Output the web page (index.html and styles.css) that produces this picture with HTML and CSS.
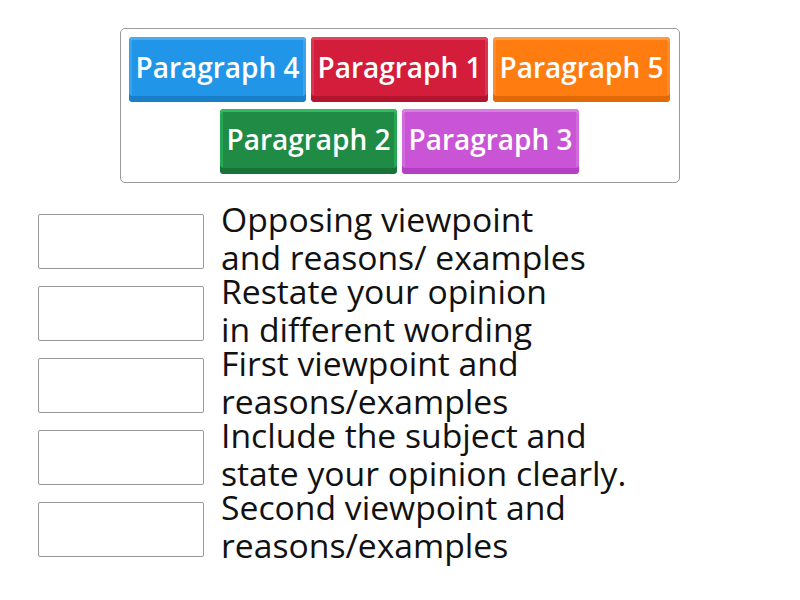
FILE: index.html
```html
<html>
<head>
  <link rel="stylesheet" href="styles.css">
</head>
<body>
<div class="page">
  <!-- the answer tiles -->
  <div class="tray">
    <div class="tile tile-blue">Paragraph 4</div>
    <div class="tile tile-red">Paragraph 1</div>
    <div class="tile tile-orange">Paragraph 5</div>
    <div class="tile tile-green">Paragraph 2</div>
    <div class="tile tile-purple">Paragraph 3</div>
  </div>

  <!-- the drop targets -->
  <div class="slots">
    <div class="slot">
      <div class="slot__box"></div>
      <div class="slot__text">Opposing viewpoint<br>and reasons/ examples</div>
    </div>
    <div class="slot">
      <div class="slot__box"></div>
      <div class="slot__text">Restate your opinion<br>in different wording</div>
    </div>
    <div class="slot">
      <div class="slot__box"></div>
      <div class="slot__text">First viewpoint and<br>reasons/examples</div>
    </div>
    <div class="slot">
      <div class="slot__box"></div>
      <div class="slot__text">Include the subject and<br>state your opinion clearly.</div>
    </div>
    <div class="slot">
      <div class="slot__box"></div>
      <div class="slot__text">Second viewpoint and<br>reasons/examples</div>
    </div>
  </div>
</div>
</body>
</html>
```

FILE: styles.css
```css
*{
  margin:0;
  box-sizing:border-box;
}
body{
  background:#fff;
  font-family:"Open Sans", "Noto Sans", sans-serif;
}
.page{
  width:800px;
  height:600px;
  padding-top:28px;
}

/* tiles tray */
.tray{
  width:560px;
  margin:0 auto;
  padding:8px 8px 8px 7px;
  border:1px solid #9a9a9a;
  border-radius:5px;
  display:flex;
  flex-wrap:wrap;
  justify-content:center;
  gap:7px 5px;
}
.tile{
  width:177px;
  height:65px;
  border-radius:4px;
  color:#fff;
  font-size:28px;
  font-weight:600;
  display:flex;
  align-items:center;
  justify-content:center;
  padding-bottom:5px;
  white-space:nowrap;
}
.tile-blue{
  background:#2196e8;
  box-shadow:inset 0 -6px 0 #1a7fc9, inset 0 3px 0 #4aaaf0, inset 3px 0 0 #3aa2ec, inset -3px 0 0 #3aa2ec;
}
.tile-red{
  background:#d31d3a;
  box-shadow:inset 0 -6px 0 #b3142e, inset 0 3px 0 #e04459, inset 3px 0 0 #db344e, inset -3px 0 0 #db344e;
}
.tile-orange{
  background:#ff7d10;
  box-shadow:inset 0 -6px 0 #e06a05, inset 0 3px 0 #ff9a45, inset 3px 0 0 #ff8c2c, inset -3px 0 0 #ff8c2c;
}
.tile-green{
  background:#1f8b45;
  box-shadow:inset 0 -6px 0 #177338, inset 0 3px 0 #2fbb60, inset 3px 0 0 #27a654, inset -3px 0 0 #27a654;
}
.tile-purple{
  background:#c955d6;
  box-shadow:inset 0 -6px 0 #b63ec5, inset 0 3px 0 #d780e2, inset 3px 0 0 #d16bdd, inset -3px 0 0 #d16bdd;
}

/* drop targets */
.slots{
  margin-top:31px;
  padding-left:38px;
  display:flex;
  flex-direction:column;
  gap:17px;
}
.slot{
  height:55px;
  display:flex;
  align-items:center;
  gap:17px;
}
.slot__box{
  width:166px;
  height:55px;
  border:1px solid #999;
  border-radius:2px;
  flex:none;
}
.slot__text{
  font-size:33.7px;
  line-height:38px;
  color:#111;
  white-space:nowrap;
  margin-top:-8px;
}
```
